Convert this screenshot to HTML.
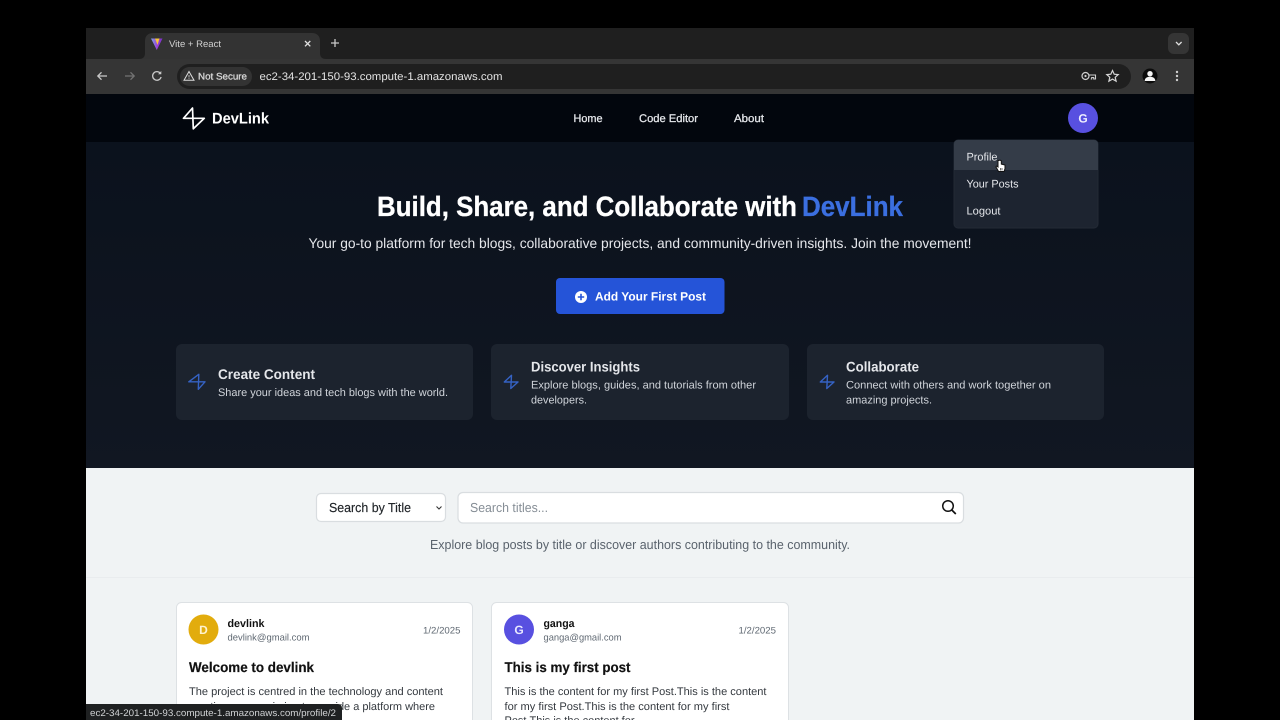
<!DOCTYPE html>
<html lang="en">
<head>
<meta charset="utf-8">
<title>Vite + React</title>
<style>
html,body{margin:0;padding:0;background:#000;width:1280px;height:720px;overflow:hidden}
svg{display:block;filter:blur(.3px)}
text{font-family:"Liberation Sans",sans-serif;text-rendering:geometricPrecision}
.m{stroke:#e5e7eb;stroke-width:.28px}
.c{stroke:#d6d6d6;stroke-width:.3px}
</style>
</head>
<body>
<svg width="1280" height="720" viewBox="0 0 1280 720" xmlns="http://www.w3.org/2000/svg">
<defs>
<linearGradient id="hero" x1="0" y1="0" x2="0" y2="1"><stop offset="0" stop-color="#0a111c"/><stop offset="1" stop-color="#111722"/></linearGradient>
<linearGradient id="vite" x1="0" y1="0" x2="1" y2="0"><stop offset="0" stop-color="#7fa8e8"/><stop offset=".55" stop-color="#9a3fd8"/><stop offset="1" stop-color="#7a30c8"/></linearGradient>
</defs>
<rect width="1280" height="720" fill="#000"/>

<!-- browser chrome -->
<rect x="86" y="28" width="1108" height="31" fill="#1f1f1f"/>
<path d="M139 59c4 0 6-2 6-6V41c0-5 3-8 8-8h159c5 0 8 3 8 8v12c0 4 2 6 6 6z" fill="#333333"/>
<path d="M151 38.500h11.500l-5.700 11.500z" fill="url(#vite)"/>
<path d="M155 38.500h4.500l-2 6.500z" fill="#f5c53a"/>
<text x="169" y="47" font-size="9.500" fill="#d4d4d4" textLength="52" lengthAdjust="spacingAndGlyphs">Vite + React</text>
<path d="M305 41l5.300 5.300M310.300 41l-5.300 5.300" stroke="#e0e0e0" stroke-width="1.300" fill="none"/>
<path d="M335 39v8M331 43h8" stroke="#c8c8c8" stroke-width="1.300" fill="none"/>
<rect x="1168" y="33" width="21" height="21" rx="6" fill="#353535"/>
<path d="M1176 42l2.800 2.800 2.800-2.800" stroke="#e0e0e0" stroke-width="1.300" fill="none"/>

<rect x="86" y="59" width="1108" height="35" fill="#353535"/>
<path d="M107 76H98M101.500 72.300L97.800 76l3.700 3.700" stroke="#c9c9c9" stroke-width="1.300" fill="none"/>
<path d="M125 76h9M130.500 72.300l3.700 3.700-3.700 3.700" stroke="#737373" stroke-width="1.300" fill="none"/>
<path d="M160.500 73.500a4.300 4.300 0 1 0 .6 3.500" stroke="#c9c9c9" stroke-width="1.300" fill="none"/>
<path d="M161.300 71v3.300H158z" fill="#c9c9c9"/>
<rect x="177" y="64" width="954" height="25" rx="12.500" fill="#1f1f1f"/>
<rect x="180" y="67" width="72" height="19" rx="9.500" fill="#333333"/>
<path d="M189 71.500l5 8.800h-10z" fill="none" stroke="#dedede" stroke-width="1"/>
<path d="M189 75v2.500M189 78.300v.7" stroke="#dedede" stroke-width=".8"/>
<text class="c" x="198" y="79.500" font-size="9.500" fill="#d6d6d6" textLength="49" lengthAdjust="spacingAndGlyphs">Not Secure</text>
<text x="259.500" y="80" font-size="11" fill="#e3e3e3" textLength="243" lengthAdjust="spacingAndGlyphs">ec2-34-201-150-93.compute-1.amazonaws.com</text>
<circle cx="1085.500" cy="76" r="3.500" fill="none" stroke="#cfcfcf" stroke-width="1.200"/>
<circle cx="1085.500" cy="76" r="1.100" fill="#cfcfcf"/>
<path d="M1089 75h6.500v4h-1.800v-1.500h-2v1.500h-1" fill="none" stroke="#cfcfcf" stroke-width="1.100"/>
<path d="M1112.500 70.500l1.700 3.700 4 .4-3 2.700.9 3.900-3.600-2.100-3.600 2.100.9-3.900-3-2.700 4-.4z" fill="none" stroke="#d5d5d5" stroke-width="1.200"/>
<circle cx="1150" cy="76" r="7.500" fill="#0c0c0c"/>
<circle cx="1150" cy="73.700" r="2.700" fill="#f6f6f6"/>
<path d="M1144.700 81c0-3 2.300-4.300 5.300-4.300s5.300 1.300 5.300 4.300z" fill="#f6f6f6"/>
<circle cx="1177" cy="72" r="1.200" fill="#cfcfcf"/><circle cx="1177" cy="76" r="1.200" fill="#cfcfcf"/><circle cx="1177" cy="80" r="1.200" fill="#cfcfcf"/>

<!-- nav + hero -->
<rect x="86" y="94" width="1108" height="374" fill="url(#hero)"/>
<rect x="86" y="94" width="1108" height="48" fill="#02060d"/>
<path d="M192.500 108L183.500 118.300H204.300L193.300 128.800Z" stroke="#fff" stroke-width="1.700" fill="none" stroke-linejoin="round"/>
<text x="212" y="123.500" font-size="15.500" font-weight="700" fill="#fff" textLength="57" lengthAdjust="spacingAndGlyphs">DevLink</text>
<text class="m" x="573.500" y="122" font-size="11" fill="#e5e7eb" textLength="29" lengthAdjust="spacingAndGlyphs">Home</text>
<text class="m" x="639" y="122" font-size="11" fill="#e5e7eb" textLength="59" lengthAdjust="spacingAndGlyphs">Code Editor</text>
<text class="m" x="734" y="122" font-size="11" fill="#e5e7eb" textLength="30" lengthAdjust="spacingAndGlyphs">About</text>
<circle cx="1083" cy="118" r="15" fill="#5850e0"/>
<text x="1083" y="122.500" font-size="12" font-weight="700" fill="#f0f0ff" text-anchor="middle">G</text>

<text x="377" y="216" font-size="28" font-weight="700" fill="#fff" stroke="#fff" stroke-width=".3" textLength="420" lengthAdjust="spacingAndGlyphs">Build, Share, and Collaborate with</text>
<text x="802" y="216" font-size="28" font-weight="700" fill="#3b6fe0" stroke="#3b6fe0" stroke-width=".3" textLength="101" lengthAdjust="spacingAndGlyphs">DevLink</text>
<text x="308.500" y="248" font-size="14" fill="#e5e7eb" textLength="663" lengthAdjust="spacingAndGlyphs">Your go-to platform for tech blogs, collaborative projects, and community-driven insights. Join the movement!</text>

<rect x="556" y="278" width="168.500" height="36" rx="4" fill="#2554d8"/>
<circle cx="581" cy="297" r="6" fill="#fff"/>
<path d="M581 293.800v6.400M577.800 297h6.400" stroke="#2554d8" stroke-width="1.600"/>
<text x="595" y="300.500" font-size="12" font-weight="700" fill="#fff" textLength="111" lengthAdjust="spacingAndGlyphs">Add Your First Post</text>

<rect x="176" y="344" width="297" height="76" rx="6" fill="#1c232e"/>
<rect x="491" y="344" width="298" height="76" rx="6" fill="#1c232e"/>
<rect x="807" y="344" width="297" height="76" rx="6" fill="#1c232e"/>
<g fill="none" stroke="#3562c4" stroke-width="1.400" stroke-linejoin="round">
<path d="M198.800 374.300L188.800 381.800H205L198.300 389.300Z"/>
<path d="M511.500 375.300L504.300 382H518L510.800 388.500Z"/>
<path d="M827.500 375.300L820.300 382H834L826.800 388.500Z"/>
</g>
<text x="218" y="379" font-size="14" font-weight="700" fill="#e5e7eb" textLength="97" lengthAdjust="spacingAndGlyphs">Create Content</text>
<text x="218" y="396" font-size="11" fill="#d1d5db" textLength="230" lengthAdjust="spacingAndGlyphs">Share your ideas and tech blogs with the world.</text>
<text x="531" y="371.500" font-size="14" font-weight="700" fill="#e5e7eb" textLength="109" lengthAdjust="spacingAndGlyphs">Discover Insights</text>
<text x="531" y="388.500" font-size="11" fill="#d1d5db" textLength="225" lengthAdjust="spacingAndGlyphs">Explore blogs, guides, and tutorials from other</text>
<text x="531" y="403.500" font-size="11" fill="#d1d5db" textLength="56" lengthAdjust="spacingAndGlyphs">developers.</text>
<text x="846" y="371.500" font-size="14" font-weight="700" fill="#e5e7eb" textLength="73" lengthAdjust="spacingAndGlyphs">Collaborate</text>
<text x="846" y="388.500" font-size="11" fill="#d1d5db" textLength="205" lengthAdjust="spacingAndGlyphs">Connect with others and work together on</text>
<text x="846" y="403.500" font-size="11" fill="#d1d5db" textLength="86" lengthAdjust="spacingAndGlyphs">amazing projects.</text>

<!-- dropdown -->
<rect x="954" y="140" width="144" height="88" rx="4" fill="#1d2430" stroke="#232a35" stroke-width="1"/>
<path d="M954 144a4 4 0 0 1 4-4h136a4 4 0 0 1 4 4v26h-144z" fill="#343c48"/>
<text x="966.500" y="160.500" font-size="11" fill="#e5e7eb" textLength="31" lengthAdjust="spacingAndGlyphs">Profile</text>
<text x="966.500" y="187.500" font-size="11" fill="#e5e7eb" textLength="52" lengthAdjust="spacingAndGlyphs">Your Posts</text>
<text x="966.500" y="214.500" font-size="11" fill="#e5e7eb" textLength="34" lengthAdjust="spacingAndGlyphs">Logout</text>
<path d="M998 160.500v6.500l-1.300-1-.8.900 2.700 4.600h5.400l1-2.800v-3.700l-3.700-.9v-3c0-1-2.300-1-2.300-.6z" fill="#fff" stroke="#111" stroke-width="1"/>
<path d="M1000.500 168v2.500M1002 168v2.500" stroke="#111" stroke-width=".6"/>

<!-- content -->
<rect x="86" y="468" width="1108" height="252" fill="#f0f3f4"/>
<rect x="86" y="577" width="1108" height="1" fill="#e9ecee"/>
<rect x="316.500" y="493.500" width="129" height="28" rx="4.500" fill="#fff" stroke="#d9dde0" stroke-width="1.200"/>
<text x="329" y="512" font-size="13" fill="#212529" stroke="#212529" stroke-width=".15" textLength="82" lengthAdjust="spacingAndGlyphs">Search by Title</text>
<path d="M436.500 506.500l2.500 2.500 2.500-2.500" stroke="#333" stroke-width="1.100" fill="none"/>
<rect x="458" y="492.500" width="505.500" height="30.500" rx="5" fill="#fff" stroke="#d9dde0" stroke-width="1.200"/>
<text x="470" y="512" font-size="13" fill="#868e96" textLength="78" lengthAdjust="spacingAndGlyphs">Search titles...</text>
<circle cx="948" cy="506" r="5.300" fill="none" stroke="#111" stroke-width="1.500"/>
<path d="M951.800 510l4 4" stroke="#111" stroke-width="1.700"/>
<text x="430" y="549" font-size="13" fill="#59626c" textLength="420" lengthAdjust="spacingAndGlyphs">Explore blog posts by title or discover authors contributing to the community.</text>

<rect x="176.500" y="602.500" width="296" height="130" rx="5" fill="#fff" stroke="#dde1e4"/>
<rect x="491.500" y="602.500" width="297" height="130" rx="5" fill="#fff" stroke="#dde1e4"/>

<circle cx="203.500" cy="629.500" r="15" fill="#e2ac0d"/>
<text x="203.500" y="634" font-size="12" font-weight="700" fill="#fff3d0" text-anchor="middle">D</text>
<text x="227.500" y="627" font-size="11" font-weight="700" fill="#111" textLength="37" lengthAdjust="spacingAndGlyphs">devlink</text>
<text x="227.500" y="640.500" font-size="9.500" fill="#5f6872" textLength="82" lengthAdjust="spacingAndGlyphs">devlink@gmail.com</text>
<text x="423" y="633.500" font-size="9.500" fill="#5f6872" textLength="37.500" lengthAdjust="spacingAndGlyphs">1/2/2025</text>
<text x="189" y="672" font-size="14" font-weight="700" fill="#111" stroke="#111" stroke-width=".2" textLength="125" lengthAdjust="spacingAndGlyphs">Welcome to devlink</text>
<text x="189" y="695" font-size="11" fill="#33383e" textLength="254" lengthAdjust="spacingAndGlyphs">The project is centred in the technology and content</text>
<text x="189" y="710" font-size="11" fill="#33383e" textLength="246" lengthAdjust="spacingAndGlyphs">creation space, aiming to provide a platform where</text>

<circle cx="519" cy="629.500" r="15" fill="#5850e0"/>
<text x="519" y="634" font-size="12" font-weight="700" fill="#e8e8ff" text-anchor="middle">G</text>
<text x="543.500" y="627" font-size="11" font-weight="700" fill="#111" textLength="31" lengthAdjust="spacingAndGlyphs">ganga</text>
<text x="543.500" y="640.500" font-size="9.500" fill="#5f6872" textLength="78" lengthAdjust="spacingAndGlyphs">ganga@gmail.com</text>
<text x="738.500" y="633.500" font-size="9.500" fill="#5f6872" textLength="37.500" lengthAdjust="spacingAndGlyphs">1/2/2025</text>
<text x="504.500" y="672" font-size="14" font-weight="700" fill="#111" stroke="#111" stroke-width=".2" textLength="126" lengthAdjust="spacingAndGlyphs">This is my first post</text>
<text x="504.500" y="695" font-size="11" fill="#33383e" textLength="262" lengthAdjust="spacingAndGlyphs">This is the content for my first Post.This is the content</text>
<text x="504.500" y="710" font-size="11" fill="#33383e" textLength="225" lengthAdjust="spacingAndGlyphs">for my first Post.This is the content for my first</text>
<text x="504.500" y="724" font-size="11" fill="#33383e" textLength="130" lengthAdjust="spacingAndGlyphs">Post.This is the content for</text>

<!-- status bubble -->
<path d="M86 704h252a4 4 0 0 1 4 4v12H86z" fill="#1f2122"/>
<text x="90" y="716" font-size="9.500" fill="#d0d2d4" textLength="246" lengthAdjust="spacingAndGlyphs">ec2-34-201-150-93.compute-1.amazonaws.com/profile/2</text>
</svg>
</body>
</html>
